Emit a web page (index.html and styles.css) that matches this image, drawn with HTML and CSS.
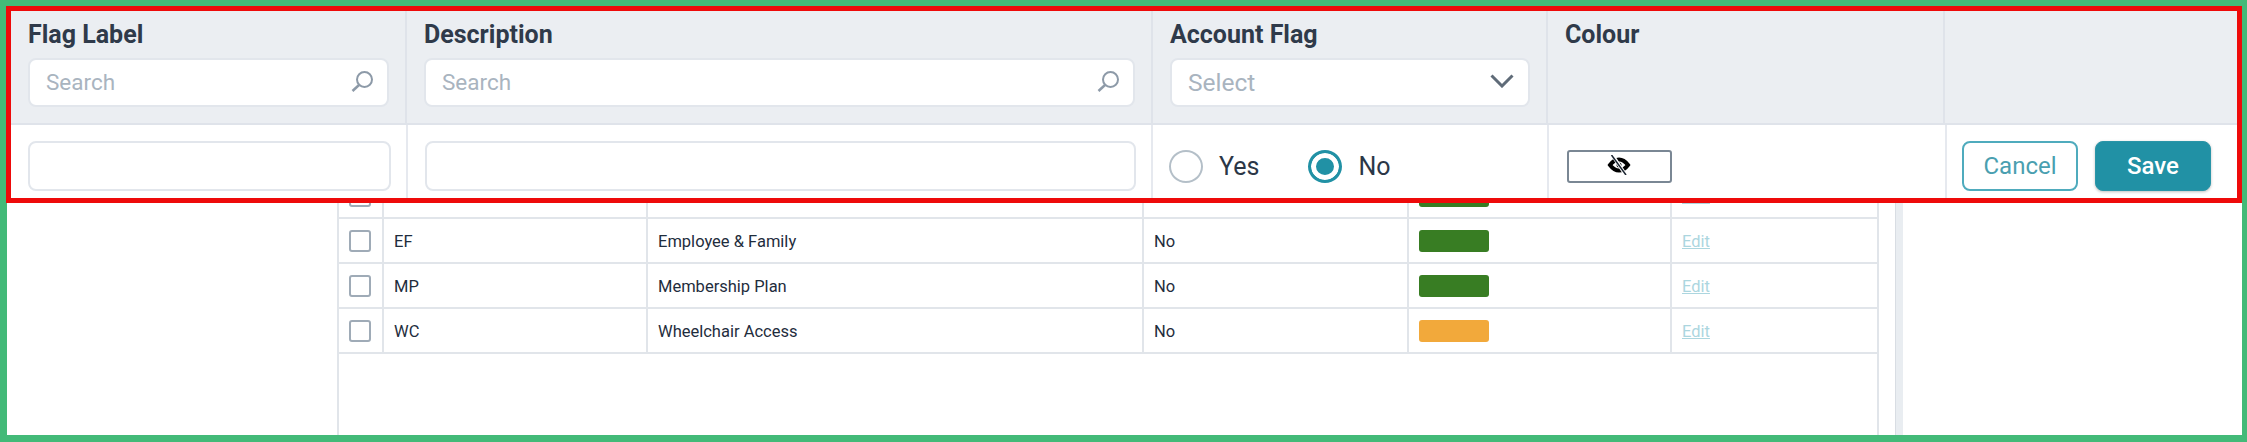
FILE: index.html
```html
<!DOCTYPE html>
<html lang="en">
<head>
    <meta charset="UTF-8">
    <meta name="viewport" content="width=device-width, initial-scale=1.0">
    <title>Account Flags</title>
    <link rel="stylesheet" href="styles.css">
</head>
<body>
    <div class="frame">
        <div class="table-con">
            <div class="row">
                <div class="cell check"><span class="box"></span></div>
                <div class="cell"></div>
                <div class="cell"></div>
                <div class="cell"></div>
                <div class="cell"><span class="swatch green"></span></div>
                <div class="cell"><a class="edit" href="#">Edit</a></div>
            </div>
            <div class="row">
                <div class="cell check"><span class="box"></span></div>
                <div class="cell">EF</div>
                <div class="cell">Employee &amp; Family</div>
                <div class="cell">No</div>
                <div class="cell"><span class="swatch green"></span></div>
                <div class="cell"><a class="edit" href="#">Edit</a></div>
            </div>
            <div class="row">
                <div class="cell check"><span class="box"></span></div>
                <div class="cell">MP</div>
                <div class="cell">Membership Plan</div>
                <div class="cell">No</div>
                <div class="cell"><span class="swatch green"></span></div>
                <div class="cell"><a class="edit" href="#">Edit</a></div>
            </div>
            <div class="row">
                <div class="cell check"><span class="box"></span></div>
                <div class="cell">WC</div>
                <div class="cell">Wheelchair Access</div>
                <div class="cell">No</div>
                <div class="cell"><span class="swatch orange"></span></div>
                <div class="cell"><a class="edit" href="#">Edit</a></div>
            </div>
        </div>
        <div class="strip"></div>

        <!-- add flag form, sits over the table -->
        <div class="panel">
            <div class="head">
                <div class="head-cell">
                    <h4>Flag Label</h4>
                    <div class="field">
                        <span class="hint">Search</span>
                        <svg class="search" viewBox="0 0 23 21"><circle cx="13.500" cy="8.500" r="7.500"/><path d="M8 14 1.500 20"/></svg>
                    </div>
                </div>
                <div class="head-cell">
                    <h4>Description</h4>
                    <div class="field">
                        <span class="hint">Search</span>
                        <svg class="search" viewBox="0 0 23 21"><circle cx="13.500" cy="8.500" r="7.500"/><path d="M8 14 1.500 20"/></svg>
                    </div>
                </div>
                <div class="head-cell">
                    <h4>Account Flag</h4>
                    <div class="field">
                        <span class="hint select">Select</span>
                        <svg class="chevron" viewBox="0 0 24 14"><path d="M1.500 1.500 12 12 22.500 1.500"/></svg>
                    </div>
                </div>
                <div class="head-cell">
                    <h4>Colour</h4>
                </div>
                <div class="head-cell last"></div>
            </div>
            <div class="body-row">
                <div class="body-cell"><input class="text-in" type="text"></div>
                <div class="body-cell"><input class="text-in" type="text"></div>
                <div class="body-cell radios">
                    <span class="radio"></span><span class="radio-text">Yes</span>
                    <span class="radio on"></span><span class="radio-text">No</span>
                </div>
                <div class="body-cell colour-cell">
                    <div class="colour-btn">
                        <svg class="eye" viewBox="0 0 24 20"><path class="eye-line" d="M3 10C6 6 9 4.500 12 4.500S18 6 21 10C18 14 15 15.500 12 15.500S6 14 3 10Z"/><circle cx="12" cy="10" r="2.500"/><path class="eye-gap" d="M6 1 18 19"/><path class="eye-slash" d="M4.500 0 19 20"/></svg>
                    </div>
                </div>
                <div class="body-cell actions">
                    <button class="btn cancel">Cancel</button>
                    <button class="btn save">Save</button>
                </div>
            </div>
        </div>
    </div>
</body>
</html>
```

FILE: styles.css
```css
*{
    margin: 0;
    padding: 0;
    box-sizing: border-box;
    font-family: "Roboto", "Liberation Sans", sans-serif;
}
html, body{
    height: 100%;
    overflow: hidden;
}
.frame{
    position: relative;
    display: flex;
    height: 442px;
    border-style: solid;
    border-color: #43ba78;
    border-width: 6px 5px 7px 7px;
    background-color: #fff;
}
.table-con{
    width: 1542px;
    margin-left: 330px;
    padding-top: 168px;
    border-left: 2px solid #e1e5ea;
    border-right: 2px solid #e1e5ea;
}
.strip{
    width: 8px;
    margin-left: 16px;
    background-color: #e9edf1;
    border-left: 1px solid #d8dde3;
}
.row{
    display: grid;
    grid-template-columns: 45px 264px 496px 265px 263px 1fr;
    height: 45px;
    border-bottom: 2px solid #e1e5ea;
}
.cell{
    display: flex;
    align-items: center;
    padding-left: 10px;
    padding-top: 2px;
    font-size: 16.500px;
    color: #1f2d3d;
    border-right: 2px solid #e1e5ea;
}
.cell:last-child{
    border-right: none;
}
.box{
    width: 22px;
    height: 22px;
    margin-top: -2px;
    border: 2px solid #9fabb7;
    border-radius: 3px;
}
.swatch{
    width: 70px;
    height: 22px;
    margin-top: -2px;
    border-radius: 3px;
}
.green{
    background-color: #387d23;
}
.orange{
    background-color: #f2a93b;
}
.edit{
    color: #acd6df;
}
.panel{
    position: absolute;
    left: -1px;
    top: 0;
    width: 2236px;
    height: 197px;
    border: 5px solid #ee0a0a;
    background-color: #fff;
}
.head{
    display: grid;
    grid-template-columns: 396px 746px 395px 397px 1fr;
    height: 114px;
    background-color: #ebeef2;
    border-bottom: 2px solid #dfe3ea;
}
.head-cell{
    padding: 11px 16px 0 17px;
    border-right: 2px solid #dfe3ea;
}
.head-cell.last{
    border-right: none;
}
h4{
    font-size: 25px;
    font-weight: 700;
    line-height: 26px;
    color: #2f3a4a;
    margin-bottom: 10px;
}
.field{
    display: flex;
    align-items: center;
    justify-content: space-between;
    height: 49px;
    padding: 0 13px 0 16px;
    background-color: #fff;
    border: 2px solid #e2e6ec;
    border-radius: 8px;
}
.hint{
    font-size: 22.500px;
    color: #a9b4bf;
    margin-top: -2px;
}
.hint.select{
    font-size: 24.500px;
    margin-top: 0;
}
.search{
    width: 23px;
    height: 21px;
    margin-top: -2px;
    fill: none;
    stroke: #8d9aa8;
    stroke-width: 2;
}
.search path{
    stroke-width: 2.500;
}
.chevron{
    width: 24px;
    height: 14px;
    fill: none;
    stroke: #5f6b78;
    stroke-width: 3;
    margin-right: 1px;
    margin-top: -4px;
}
.body-row{
    display: grid;
    grid-template-columns: 397px 745px 396px 398px 1fr;
    height: 73px;
}
.body-cell{
    padding: 16px 15px 0 17px;
    border-right: 2px solid #e6e9ef;
}
.body-cell:last-child{
    border-right: none;
}
.text-in{
    display: block;
    width: 100%;
    height: 50px;
    border: 2px solid #e2e6ec;
    border-radius: 8px;
    outline: none;
}
.radios{
    display: flex;
    align-items: flex-start;
    padding-top: 25px;
    padding-left: 16px;
}
.radio{
    width: 34px;
    height: 33px;
    border: 2px solid #b4bfc8;
    border-radius: 50%;
    margin-right: 16px;
}
.radio.on{
    border: 3px solid #2191a5;
    background-color: #2191a5;
    box-shadow: inset 0 0 0 5px #fff;
}
.radio-text{
    font-size: 25px;
    line-height: 33px;
    color: #2b3747;
    margin-right: 49px;
}
.colour-cell{
    padding-top: 25px;
    padding-left: 18px;
}
.colour-btn{
    display: flex;
    justify-content: center;
    align-items: center;
    width: 105px;
    height: 33px;
    border: 2px solid #7a8794;
    border-radius: 3px;
}
.eye{
    width: 24px;
    height: 20px;
    margin-top: -4px;
    margin-left: -2px;
}
.eye .eye-line{
    fill: none;
    stroke: #000;
    stroke-width: 4;
}
.eye circle{
    fill: #000;
}
.eye .eye-gap{
    stroke: #fff;
    stroke-width: 3.500;
}
.eye .eye-slash{
    stroke: #1a2430;
    stroke-width: 1.500;
}
.actions{
    display: flex;
    gap: 17px;
    padding-left: 15px;
}
.btn{
    width: 116px;
    height: 50px;
    border-radius: 8px;
    font-size: 24px;
    cursor: pointer;
}
.cancel{
    background-color: #fff;
    border: 2px solid #4fabbd;
    color: #4a9fb0;
}
.save{
    background-color: #2191a5;
    border: 1px solid #2a95a8;
    color: #fff;
    font-weight: 500;
    box-shadow: 0 1px 3px rgba(0, 0, 0, 0.25);
}
```
